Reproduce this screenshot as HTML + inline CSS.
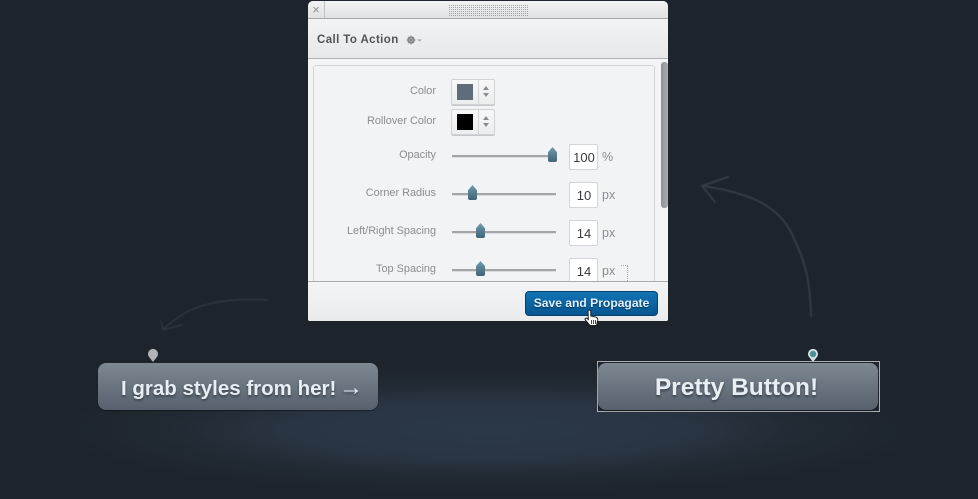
<!DOCTYPE html>
<html><head><meta charset="utf-8"><style>
html,body{margin:0;padding:0}
body{width:978px;height:499px;overflow:hidden;position:relative;background:#1d242c;font-family:"Liberation Sans",sans-serif}
div,span,svg{position:absolute;box-sizing:border-box}
.glow{left:0;top:365px;width:978px;height:130px;background:radial-gradient(ellipse 440px 65px at 50% 50%,#2b3846 0%,#293542 45%,rgba(35,44,54,.6) 75%,rgba(29,36,44,0) 100%)}
.modal{left:308px;top:1px;width:360px;height:320px;background:#f3f4f5;border-radius:5px 5px 2px 2px;overflow:hidden}
.bar{left:0;top:0;width:360px;height:18px;background:linear-gradient(#f2f3f4,#dfe1e3);border-bottom:1px solid #a5a8ab}
.x{left:0;top:0;width:17px;height:17px;border-right:1px solid #c0c3c6;color:#8d9093;font-size:13px;line-height:17px;text-align:center}
.grip{left:141px;top:4px;width:80px;height:11px;background-image:radial-gradient(circle at .5px .5px,#a0a3a6 .6px,transparent .7px);background-size:2px 2px}
.head{left:0;top:18px;width:360px;height:40px;background:linear-gradient(#f2f3f4,#e6e8ea);border-bottom:1px solid #b0b3b6}
.title{left:9px;top:15px;font-size:11.5px;font-weight:bold;color:#505357;letter-spacing:.4px;white-space:nowrap}
.panel{left:5px;top:64px;width:342px;height:240px;background:#f2f3f5;border:1px solid #d2d5d8;border-radius:3px}
.scroll{left:353px;top:61px;width:7px;height:146px;background:linear-gradient(90deg,#8f9296,#a9acb0);border-radius:3px}
.foot{left:0;top:280px;width:360px;height:40px;background:linear-gradient(#f3f4f5,#e9ebec);border-top:1px solid #a9acaf}
.lb{right:232px;font-size:10.9px;color:#8a8d91;white-space:nowrap;text-align:right}
.sw{left:143px;width:44px;height:26px;background:linear-gradient(#f8f8f9,#eceded);border:1px solid #d0d2d5;border-radius:2px;box-shadow:0 1px 0 #c6c8cb}
.sw i{position:absolute;display:block;left:5px;top:4px;width:16px;height:16px}
.sw b{position:absolute;display:block;left:26px;top:0;width:1px;height:24px;background:#d3d5d8}
.up,.dn{left:31px;width:0;height:0;border-left:3px solid transparent;border-right:3px solid transparent}
.up{top:6px;border-bottom:4px solid #8a8c8f}.dn{top:13px;border-top:4px solid #8a8c8f}
.track{left:144px;width:104px;height:2px;background:#a3a5a7;box-shadow:0 1px 0 #dcdde0}
.thumb{width:9px;height:15px;background:linear-gradient(#6f9bad,#3f6579);clip-path:polygon(50% 0,100% 35%,100% 100%,0 100%,0 35%);border-radius:0 0 2px 2px}
.inp{left:261px;width:29px;height:26px;background:#fff;border:1px solid #d2d4d7;border-radius:2px;font-size:13px;color:#3a3c3f;text-align:center;line-height:25px;padding-left:1px}
.un{left:294px;font-size:12.5px;color:#8a8d91}
.save{left:217px;top:9px;width:133px;height:25px;border-radius:4px;background:linear-gradient(#1274b4,#05558f);border:1px solid #0b3f69;color:#e4eff8;font-size:12.1px;font-weight:bold;text-align:center;line-height:23px;text-shadow:0 1px 1px #03365c;white-space:nowrap}
.btn{height:47px;top:363px;width:280px;border-radius:8px;background:linear-gradient(#7d8893,#56616d);color:#e9eef4;font-weight:bold;white-space:nowrap;text-shadow:0 2px 2px #3a434d;box-shadow:0 1px 1px rgba(0,0,0,.4)}
em{font-style:normal;font-weight:normal;font-size:24px;line-height:0;margin-left:-3px}
</style></head><body>
<div class="glow"></div>

<svg style="left:0;top:0;filter:blur(.5px)" width="978" height="499" fill="none" stroke-linecap="round">
<path d="M811 316C810 280 806 262 790 230C775 205 750 193 703 186" stroke="#343c45" stroke-width="2"/>
<path d="M728 177L702 186L715 202" stroke="#343c45" stroke-width="2"/>
<path d="M268 300C225 298 190 302 163 330" stroke="#2e363e" stroke-width="1.6"/>
<path d="M161 321L163 330L182 325" stroke="#2e363e" stroke-width="1.6"/>
</svg>

<div class="modal">
<div class="bar"><div class="x">×</div><div class="grip"></div></div>
<div class="head"><div class="title">Call To Action</div>
<svg style="left:98px;top:16px" width="20" height="11"><circle cx="5" cy="5" r="3" fill="none" stroke="#85888b" stroke-width="1.600"/><path d="M5 .5V9.500M.5 5H9.500M2 2L8 8M8 2L2 8" stroke="#85888b" stroke-width=".9"/><path d="M11 4.500H16L13.500 6.500Z" fill="#a0a2a5"/></svg>
</div>
<div class="panel"></div>
<div class="scroll"></div>

<div class="lb" style="top:84px">Color</div>
<div class="sw" style="top:78px"><i style="background:#5f6c7b"></i><b></b><span class="up"></span><span class="dn"></span></div>
<div class="lb" style="top:114px">Rollover Color</div>
<div class="sw" style="top:108px"><i style="background:#000"></i><b></b><span class="up"></span><span class="dn"></span></div>

<div class="lb" style="top:148px">Opacity</div>
<div class="track" style="top:154px"></div><div class="thumb" style="left:240px;top:146px"></div>
<div class="inp" style="top:143px">100</div><div class="un" style="top:149px">%</div>

<div class="lb" style="top:186px">Corner Radius</div>
<div class="track" style="top:192px"></div><div class="thumb" style="left:160px;top:184px"></div>
<div class="inp" style="top:181px">10</div><div class="un" style="top:187px">px</div>

<div class="lb" style="top:224px">Left/Right Spacing</div>
<div class="track" style="top:230px"></div><div class="thumb" style="left:168px;top:222px"></div>
<div class="inp" style="top:219px">14</div><div class="un" style="top:225px">px</div>

<div class="lb" style="top:262px">Top Spacing</div>
<div class="track" style="top:268px"></div><div class="thumb" style="left:168px;top:260px"></div>
<div class="inp" style="top:257px">14</div><div class="un" style="top:263px">px</div>
<div style="left:313px;top:264px;width:7px;height:16px;border-top:1px dotted #a5a8ab;border-right:1px dotted #a5a8ab"></div>

<div class="foot"><div class="save">Save and Propagate</div></div>
</div>

<svg style="left:584px;top:309px" width="16" height="18"><path d="M4 2C4.500 .8 6.500 .8 6.800 2.200V7L12 8.200C13.500 8.700 14 9.800 13.700 11.500L12.500 16.500H6L1.300 11C.5 9.800 2 8.500 3.200 9.500L4.300 10.500Z" fill="#fff" stroke="#1a1a1a" stroke-width="1"/><path d="M7.500 11V15M9.500 11V15M11.500 11V15" stroke="#1a1a1a" stroke-width=".8"/></svg>

<div class="btn" style="left:98px;font-size:20.500px;line-height:51px;padding-left:23px">I grab styles from her! <em>→</em></div>
<div style="left:597px;top:361px;width:283px;height:51px;border:1px solid #a8adb3;background:#20272f"></div>
<div class="btn" style="left:598px;font-size:24.500px;line-height:49px;text-align:center;padding-right:3px">Pretty Button!</div>

<svg style="left:147px;top:348px" width="12" height="15"><path d="M6 14L2.500 9.500A5 5 0 1 1 9.500 9.500Z" fill="#b1b4b6"/></svg>
<svg style="left:807px;top:348px" width="12" height="15"><path d="M6 14L2.500 9.500A5 5 0 1 1 9.500 9.500Z" fill="#d5e2e4"/><circle cx="6" cy="6" r="3.200" fill="#4d8f96"/></svg>
</body></html>
